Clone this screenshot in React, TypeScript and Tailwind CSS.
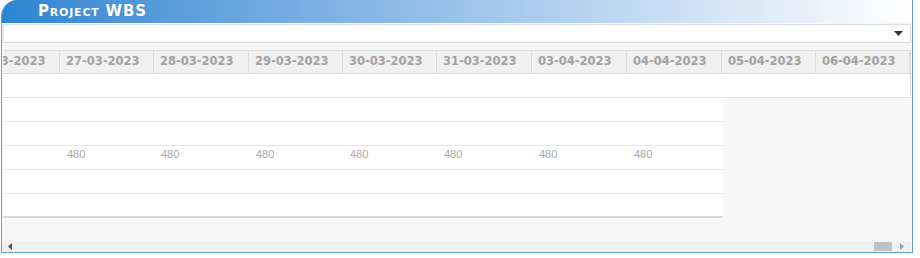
import React from "react";

const cols = [
  { label: "26-03-2023", w: "w-[94px]", v: false },
  { label: "27-03-2023", w: "w-[94px]", v: true },
  { label: "28-03-2023", w: "w-[95px]", v: true },
  { label: "29-03-2023", w: "w-[94px]", v: true },
  { label: "30-03-2023", w: "w-[94px]", v: true },
  { label: "31-03-2023", w: "w-[95px]", v: true },
  { label: "03-04-2023", w: "w-[95px]", v: true },
  { label: "04-04-2023", w: "w-[95px]", v: true },
  { label: "05-04-2023", w: "w-[94px]", v: false },
  { label: "06-04-2023", w: "w-[94px]", v: false },
];

const bodyCols = cols.slice(0, 8);

export default function App() {
  return (
    <div className="w-[920px] h-[258px] bg-white">
      <div className="ml-[1px] w-[912px] h-[253px] border-l border-r border-b border-[#5ba0da] rounded-tl-[16px] overflow-hidden bg-[#f7f7f7] flex flex-col">
        {/* title bar */}
        <div className="h-[23px] shrink-0 bg-gradient-to-r from-[#2a85d0] to-white flex items-center pl-[36px]">
          <span
            className="text-white font-bold text-[15px] tracking-[0.8px] [font-variant:small-caps] leading-none [text-shadow:0_0_1px_rgba(0,0,0,0.15)]"
            style={{ fontFamily: '"DejaVu Sans", Verdana, sans-serif' }}
          >
            Project WBS
          </span>
        </div>
        {/* dropdown */}
        <div className="pt-[1px] px-[1px] shrink-0">
          <div className="h-[19px] bg-white border border-[#dedede] flex items-center justify-end pr-[7px]">
            <svg width="9" height="5" viewBox="0 0 9 5">
              <path d="M0 0 L9 0 L4.5 5 Z" fill="#333" />
            </svg>
          </div>
        </div>
        {/* table area */}
        <div className="flex-1 mt-[7px] mx-[1px] overflow-hidden flex flex-col">
          {/* header row */}
          <div className="h-[24px] shrink-0 bg-[#f0f0f0] border-t border-b border-r border-[#dcdcdc] overflow-hidden">
            <div className="flex h-full -ml-[37px]">
              {cols.map((c, i) => (
                <div
                  key={i}
                  className={`${c.w} shrink-0 h-full border-r border-[#dcdcdc] flex items-center pl-[6px] text-[11.5px] font-bold text-[#a2a2a2] whitespace-nowrap`}
                  style={{ fontFamily: '"DejaVu Sans", Verdana, sans-serif' }}
                >
                  {c.label}
                </div>
              ))}
            </div>
          </div>
          {/* filter row */}
          <div className="h-[24px] shrink-0 bg-white border-b border-r border-[#e3e3e3]" />
          {/* body rows */}
          <div className="w-[720px] shrink-0 bg-white">
            {[0, 1, 2, 3, 4].map((r) => (
              <div
                key={r}
                className={`h-[24px] border-b ${r === 4 ? "border-b-2 border-[#d8d8d8]" : "border-[#e6e6e6]"} overflow-hidden`}
              >
                {r === 2 && (
                  <div className="flex h-full -ml-[37px] pb-[6px]">
                    {bodyCols.map((c, i) => (
                      <div
                        key={i}
                        className={`${c.w} shrink-0 h-full flex items-center pl-[7px] text-[11px] text-[#a8a8a8]`}
                        style={{ fontFamily: '"Liberation Sans", Arial, sans-serif' }}
                      >
                        {c.v ? "480" : ""}
                      </div>
                    ))}
                  </div>
                )}
              </div>
            ))}
          </div>
          <div className="flex-1" />
          {/* scrollbar */}
          <div className="h-[11px] shrink-0 bg-[#f0f0f0] flex items-center">
            <div className="w-[14px] flex justify-center">
              <svg width="4" height="7" viewBox="0 0 4 7">
                <path d="M4 0 L0 3.5 L4 7 Z" fill="#505050" />
              </svg>
            </div>
            <div className="flex-1" />
            <div className="w-[18px] h-[9px] bg-[#c1c1c1]" />
            <div className="w-[19px] flex justify-center">
              <svg width="4" height="7" viewBox="0 0 4 7">
                <path d="M0 0 L4 3.5 L0 7 Z" fill="#a3a3a3" />
              </svg>
            </div>
          </div>
        </div>
      </div>
    </div>
  );
}
